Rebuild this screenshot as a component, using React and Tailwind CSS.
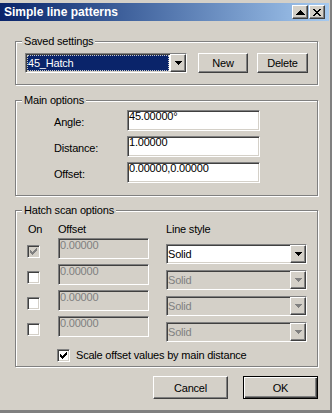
import React from 'react';

const sunken = "border border-t-[#808080] border-l-[#808080] border-r-white border-b-white shadow-[inset_1px_1px_0_#404040,inset_-1px_-1px_0_#d4d0c8]";
const raised = "border border-t-white border-l-white border-r-[#404040] border-b-[#404040] shadow-[inset_-1px_-1px_0_#808080]";
const groupBox = "relative border border-[#808080] shadow-[inset_1px_1px_0_#fff,1px_1px_0_#fff]";
const groupLabel = "absolute left-[6px] top-[-8px] bg-[#d4d0c8] px-[2px] leading-[14px]";

function Check({ color }) {
    return (
        <svg width="7" height="7" viewBox="0 0 7 7" shapeRendering="crispEdges" fill={color}>
            <path d="M6 0h1v1h-1z M5 1h2v1h-2z M0 2h1v1h-1z M4 2h3v1h-3z M0 3h2v1h-2z M3 3h3v1h-3z M0 4h5v1h-5z M1 5h3v1h-3z M2 6h1v1h-1z" />
        </svg>
    );
}

function CheckBox({ checked, disabled }) {
    return (
        <div className={"flex h-[13px] w-[13px] shrink-0 items-center justify-center " + sunken + (disabled ? " bg-[#d4d0c8]" : " bg-white")}>
            {checked && <Check color={disabled ? "#808080" : "#000"} />}
        </div>
    );
}

function DropArrow({ disabled }) {
    return (
        <div className={"flex h-full w-[16px] shrink-0 items-center justify-center bg-[#d4d0c8] " + raised}>
            <svg width="7" height="4" viewBox="0 0 7 4" shapeRendering="crispEdges" fill={disabled ? "#808080" : "#000"}>
                <path d="M0 0h7v1h-7z M1 1h5v1h-5z M2 2h3v1h-3z M3 3h1v1h-1z" />
            </svg>
        </div>
    );
}

function LineStyle({ disabled }) {
    return (
        <div className={"ml-[17px] mt-[6px] flex h-[20px] w-[141px] " + sunken + (disabled ? " bg-[#d4d0c8] text-[#808080]" : " bg-white")}>
            <div className="flex flex-1 items-center pl-[1px] leading-[14px]">Solid</div>
            <DropArrow disabled={disabled} />
        </div>
    );
}

function ScanRow({ checked, disabled, lineDisabled }) {
    return (
        <div className="flex h-[26px] items-start">
            <div className="ml-[11px] mt-[7px]">
                <CheckBox checked={checked} disabled={disabled} />
            </div>
            <div className={"ml-[18px] h-[21px] w-[91px] bg-[#d4d0c8] pl-[1px] pt-[1px] leading-[10px] text-[#808080] " + sunken}>
                0.00000
            </div>
            <LineStyle disabled={lineDisabled} />
        </div>
    );
}

function Field({ label, value }) {
    return (
        <div className="flex">
            <div className="w-[111px] pl-[38px] pt-[5px] leading-[14px]">{label}</div>
            <div className={"h-[21px] w-[133px] bg-white pl-[1px] leading-[10px] " + sunken}>{value}</div>
        </div>
    );
}

function App() {
    return (
        <div className="h-[413px] w-[332px] overflow-hidden border-r-2 border-b-[3px] border-r-[#808080] border-b-[#808080] bg-[#d4d0c8] pt-[3px] pr-[1px] font-['Liberation_Sans',Arial,sans-serif] text-[11px] tracking-[-0.2px] text-black">
            {/* title bar */}
            <div className="flex h-[18px] items-center justify-between bg-linear-to-r from-[#0a246a] to-[#a6caf0] pl-[4px] pr-[4px]">
                <span className="text-[12px] font-bold leading-none tracking-normal text-white">Simple line patterns</span>
                <div className="flex gap-[1px]">
                    <div className={"flex h-[14px] w-[16px] items-center justify-center bg-[#d4d0c8] " + raised}>
                        <svg width="9" height="5" viewBox="0 0 9 5" shapeRendering="crispEdges" fill="#000">
                            <path d="M4 0h1v1h-1z M3 1h3v1h-3z M2 2h5v1h-5z M1 3h7v1h-7z M0 4h9v1h-9z" />
                        </svg>
                    </div>
                    <div className={"flex h-[14px] w-[16px] items-center justify-center bg-[#d4d0c8] " + raised}>
                        <svg width="8" height="7" viewBox="0 0 8 7" shapeRendering="crispEdges" fill="#000">
                            <path d="M0 0h2v1h-2z M6 0h2v1h-2z M1 1h2v1h-2z M5 1h2v1h-2z M2 2h4v1h-4z M3 3h2v1h-2z M2 4h4v1h-4z M1 5h2v1h-2z M5 5h2v1h-2z M0 6h2v1h-2z M6 6h2v1h-2z" />
                        </svg>
                    </div>
                </div>
            </div>

            {/* Saved settings */}
            <div className={"mt-[20px] ml-[15px] h-[44px] w-[303px] " + groupBox}>
                <span className={groupLabel}>Saved settings</span>
                <div className="flex pt-[11px] pl-[9px]">
                    <div className={"flex h-[20px] w-[162px] bg-white " + sunken}>
                        <div className="m-[1px] flex flex-1 items-center border border-dotted border-[#c8c8c8] bg-[#0a246a] leading-[14px] text-white">
                            45_Hatch
                        </div>
                        <DropArrow />
                    </div>
                    <button className={"ml-[11px] h-[20px] w-[50px] bg-[#d4d0c8] leading-[14px] " + raised}>New</button>
                    <button className={"ml-[9px] h-[20px] w-[51px] bg-[#d4d0c8] leading-[14px] " + raised}>Delete</button>
                </div>
            </div>

            {/* Main options */}
            <div className={"mt-[15px] ml-[15px] h-[96px] w-[303px] " + groupBox}>
                <span className={groupLabel}>Main options</span>
                <div className="flex flex-col gap-[5px] pt-[9px]">
                    <Field label="Angle:" value="45.00000°" />
                    <Field label="Distance:" value="1.00000" />
                    <Field label="Offset:" value="0.00000,0.00000" />
                </div>
            </div>

            {/* Hatch scan options */}
            <div className={"mt-[14px] ml-[15px] h-[157px] w-[303px] " + groupBox}>
                <span className={groupLabel}>Hatch scan options</span>
                <div className="flex pt-[11px] leading-[14px]">
                    <span className="ml-[12px] w-[30px]">On</span>
                    <span className="w-[108px]">Offset</span>
                    <span>Line style</span>
                </div>
                <div className="mt-[2px]">
                    <ScanRow checked disabled />
                    <ScanRow lineDisabled />
                    <ScanRow lineDisabled />
                    <ScanRow lineDisabled />
                </div>
                <div className="mt-[6px] flex items-center">
                    <div className="ml-[41px]">
                        <CheckBox checked />
                    </div>
                    <span className="ml-[6px] leading-[14px]">Scale offset values by main distance</span>
                </div>
            </div>

            {/* buttons */}
            <div className="mt-[9px] flex gap-[15px] pl-[153px]">
                <button className={"h-[23px] w-[75px] bg-[#d4d0c8] leading-[14px] " + raised}>Cancel</button>
                <button className="h-[23px] w-[75px] border border-black bg-[#d4d0c8] leading-[14px] shadow-[inset_1px_1px_0_#fff,inset_-1px_-1px_0_#404040,inset_-2px_-2px_0_#808080]">OK</button>
            </div>
        </div>
    );
}

export default App;
